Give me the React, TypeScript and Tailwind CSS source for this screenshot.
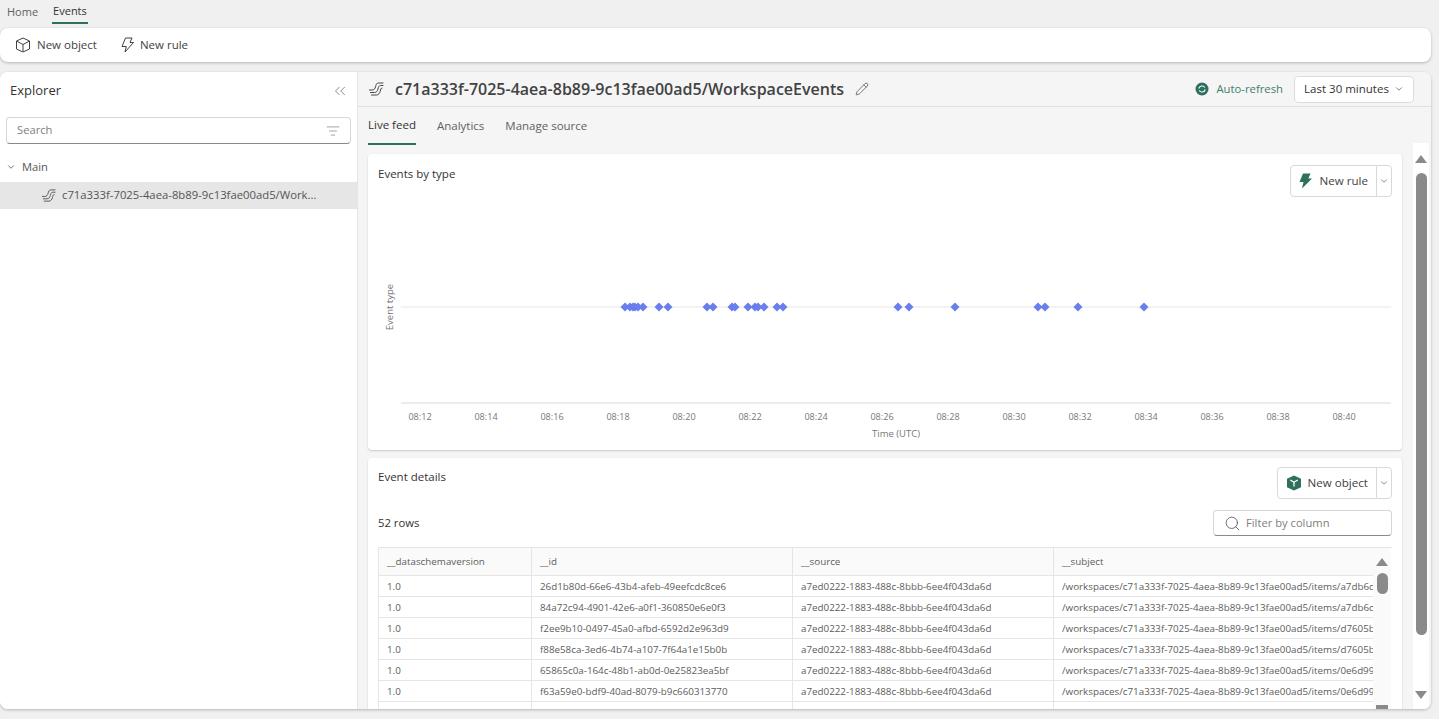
import { ChevronDown, ChevronsLeft, ListFilter, Pencil, Search } from "lucide-react";

const sans = "font-['Open_Sans','Noto_Sans',sans-serif]";

const eventXs = [625, 630, 633, 635, 638, 643, 659, 668, 707, 713, 732, 735, 748, 755, 758, 764, 777, 783, 898, 909, 955, 1038, 1045, 1078, 1144];
const ticks = ["08:12", "08:14", "08:16", "08:18", "08:20", "08:22", "08:24", "08:26", "08:28", "08:30", "08:32", "08:34", "08:36", "08:38", "08:40"];

const rows = [
  { id: "26d1b80d-66e6-43b4-afeb-49eefcdc8ce6", item: "a7db6d" },
  { id: "84a72c94-4901-42e6-a0f1-360850e6e0f3", item: "a7db6d" },
  { id: "f2ee9b10-0497-45a0-afbd-6592d2e963d9", item: "d7605b4" },
  { id: "f88e58ca-3ed6-4b74-a107-7f64a1e15b0b", item: "d7605b4" },
  { id: "65865c0a-164c-48b1-ab0d-0e25823ea5bf", item: "0e6d994" },
  { id: "f63a59e0-bdf9-40ad-8079-b9c660313770", item: "0e6d994" },
];

function StreamIcon({ className }: { className?: string }) {
  return (
    <svg viewBox="0 0 16 16" fill="none" stroke="currentColor" strokeWidth="1" strokeLinecap="round" className={className}>
      <path d="M15 2H10.500C8.500 2 8 3.800 7.500 5.800S6 9 4 9H1.500" />
      <path d="M15 4.500H12.500C11 4.500 10.500 6 10 8S8.500 11.500 6.500 11.500H2.500" />
      <path d="M14 7H14C13 7 12.700 8.500 12.200 10.300S10.500 14 8.500 14H3.500" />
    </svg>
  );
}

function CubeOutline() {
  return (
    <svg viewBox="0 0 16 16" fill="none" stroke="#424242" strokeWidth="1" strokeLinejoin="round" className="h-4 w-4">
      <path d="M8 1l6.500 3v8L8 15l-6.500-3V4z" />
      <path d="M1.800 4.200L8 7.500l6.200-3.300M8 7.500V14.700" />
    </svg>
  );
}

function BoltOutline() {
  return (
    <svg viewBox="0 0 16 16" fill="none" stroke="#424242" strokeWidth="1" strokeLinejoin="round" className="h-4 w-4">
      <path d="M6.500 1h6.500l-2 4.500h3.500L6 15l1.300-5.500H3z" />
    </svg>
  );
}

function BoltFilled() {
  return (
    <svg viewBox="0 0 16 16" fill="#2f6f5e" className="h-4 w-4">
      <path d="M6 .5h7.500l-2.200 5h3.700L5 15.500l1.500-6.500H2.500z" />
    </svg>
  );
}

function CubeFilled() {
  return (
    <svg viewBox="0 0 16 16" className="h-4 w-4">
      <path d="M8 .5l7 3.300v8.400L8 15.500l-7-3.300V3.800z" fill="#2f6f5e" />
      <path d="M4.300 5L8 7.200 11.700 5M8 7.200V11.500" stroke="#fff" strokeWidth="1.300" fill="none" />
    </svg>
  );
}

function SplitButton({ icon, label, pad }: { icon: React.ReactNode; label: string; pad: string }) {
  return (
    <div className="flex h-8 rounded border border-[#d9d9d9] bg-white text-[#424242]">
      <div className={`flex items-center gap-[6px] pr-[8px] text-[11.600px] font-medium ${pad}`}>
        {icon}
        <span>{label}</span>
      </div>
      <div className="flex w-[15px] items-center justify-center border-l border-[#d9d9d9]">
        <ChevronDown className="h-[10px] w-[10px]" strokeWidth={1.500} />
      </div>
    </div>
  );
}

function ScrollArrow({ down }: { down?: boolean }) {
  return (
    <svg viewBox="0 0 12 8" className="h-2 w-3" fill="#8a8a8a">
      <path d={down ? "M0 0h12L6 8z" : "M6 0l6 8H0z"} />
    </svg>
  );
}

function EventsChart() {
  return (
    <svg width="1034" height="254" className="block">
      <line x1="33" x2="1023" y1="111" y2="111" stroke="#e8e8e8" />
      <line x1="33" x2="1023" y1="207" y2="207" stroke="#d8d8d8" />
      {eventXs.map((x) => (
        <path key={x} d={`M${x - 368} 106.500l4.500 4.500-4.500 4.500-4.500-4.500z`} fill="#6a7eee" />
      ))}
      {ticks.map((t, i) => (
        <text key={t} x={52 + i * 66} y="224" textAnchor="middle" fontSize="9.100" fill="#777" fontFamily="Open Sans">
          {t}
        </text>
      ))}
      <text x="528" y="241" textAnchor="middle" fontSize="9.500" fill="#777" fontFamily="Open Sans">
        Time (UTC)
      </text>
      <text transform="translate(25 111) rotate(-90)" textAnchor="middle" fontSize="9.500" fill="#777" fontFamily="Open Sans">
        Event type
      </text>
    </svg>
  );
}

function EventsTable() {
  return (
    <div className="flex h-[162px] overflow-hidden border-t border-[#e5e5e5]">
      <div className="w-[995px] overflow-hidden">
        <table className="w-[1100px] table-fixed border-collapse text-[9.800px] leading-[13px] text-[#5c5c5c]">
          <colgroup>
            <col className="w-[153px]" />
            <col className="w-[261px]" />
            <col className="w-[261px]" />
            <col className="w-[425px]" />
          </colgroup>
          <thead>
            <tr className="h-[27px] bg-[#fafafa] text-left">
              {["__dataschemaversion", "__id", "__source", "__subject"].map((h) => (
                <th key={h} className="border border-t-0 border-[#e5e5e5] px-[8px] pt-[1px] font-normal">
                  {h}
                </th>
              ))}
            </tr>
          </thead>
          <tbody>
            {rows.map((r) => (
              <tr key={r.id} className="h-[21px]">
                <td className="border border-[#e5e5e5] px-[8px] pt-[2px]">1.0</td>
                <td className="border border-[#e5e5e5] px-[8px] pt-[2px]">{r.id}</td>
                <td className="border border-[#e5e5e5] px-[8px] pt-[2px]">a7ed0222-1883-488c-8bbb-6ee4f043da6d</td>
                <td className="overflow-hidden whitespace-nowrap border border-[#e5e5e5] px-[8px] pt-[2px]">
                  /workspaces/c71a333f-7025-4aea-8b89-9c13fae00ad5/items/{r.item}
                </td>
              </tr>
            ))}
            <tr className="h-[21px]">
              <td className="border border-[#e5e5e5]" />
              <td className="border border-[#e5e5e5]" />
              <td className="border border-[#e5e5e5]" />
              <td className="border border-[#e5e5e5]" />
            </tr>
          </tbody>
        </table>
      </div>
      <div className="flex w-[18px] flex-col items-center bg-[#fafafa] pt-[10px]">
        <ScrollArrow />
        <div className="mt-[7px] h-[21px] w-[11px] rounded-full bg-[#8a8a8a]" />
        <div className="mt-auto h-[4px] w-[12px] bg-[#8a8a8a]" />
      </div>
    </div>
  );
}

export default function App() {
  return (
    <div className={`${sans} flex h-screen flex-col overflow-hidden bg-[#f0f0f0] text-[#424242]`}>
      <div className="flex h-[28px] shrink-0 gap-[14px] pl-[7px] text-[11px]">
        <div className="flex h-[24px] items-center text-[#616161]">Home</div>
        <div className="flex h-[24px] items-center border-b-2 border-[#2f6f5e] px-[1px] font-medium text-[#333]">Events</div>
      </div>

      <div className="mr-2 flex h-[34px] shrink-0 items-center gap-[22px] rounded-lg bg-white pl-[15px] text-[11.500px] font-medium shadow-[0_1px_3px_rgba(0,0,0,0.25)]">
        <div className="flex items-center gap-[6px]">
          <CubeOutline />
          New object
        </div>
        <div className="flex items-center gap-[5px]">
          <BoltOutline />
          New rule
        </div>
      </div>

      <div className="mr-2 mt-[10px] flex h-[637px] shrink-0 overflow-hidden rounded-lg bg-white shadow-[0_1px_3px_rgba(0,0,0,0.25)]">
        <aside className="w-[358px] shrink-0 border-r border-[#e5e5e5] bg-white">
          <div className="flex h-[36px] items-center justify-between pl-[10px] pr-[8px] pt-[1px]">
            <span className="text-[13px] font-medium text-[#333]">Explorer</span>
            <ChevronsLeft className="h-[18px] w-[18px] text-[#666]" strokeWidth={1} />
          </div>
          <div className="mx-[6px] mt-[9px] flex h-[27px] items-center justify-between rounded border border-[#d6d6d6] border-b-[#8a8a8a] pl-[10px] pr-[10px] text-[11.200px] text-[#808080]">
            Search
            <ListFilter className="h-[14px] w-[14px]" strokeWidth={1.200} />
          </div>
          <div className="mt-[12px] flex h-[22px] items-center gap-[6px] pl-[6px] text-[11.200px] text-[#555]">
            <ChevronDown className="h-[10px] w-[10px]" />
            Main
          </div>
          <div className="mt-[4px] flex h-[27px] items-center gap-[6px] bg-[#e6e6e6] pl-[41px] text-[11.300px] text-[#555]">
            <StreamIcon className="h-[15px] w-[15px]" />
            c71a333f-7025-4aea-8b89-9c13fae00ad5/Work...
          </div>
        </aside>

        <main className="flex min-w-0 flex-1 flex-col bg-[#f5f5f5]">
          <header className="flex h-[35px] shrink-0 items-center border-b border-[#e0e0e0] pl-[10px] pr-[17px]">
            <StreamIcon className="h-4 w-4" />
            <h1 className="ml-[11px] text-[16px] font-semibold text-[#424242]">c71a333f-7025-4aea-8b89-9c13fae00ad5/WorkspaceEvents</h1>
            <Pencil className="ml-[11px] h-[14px] w-[14px]" strokeWidth={1.200} />
            <div className="ml-auto flex items-center gap-[7px] text-[11.300px] font-medium text-[#3f7f6c]">
              <svg viewBox="0 0 14 14" className="h-[14px] w-[14px]">
                <circle cx="7" cy="7" r="6.500" fill="#2f6f5e" />
                <path d="M3.800 6.500A3.300 3.300 0 0 1 9.800 5.500M10.200 7.500A3.300 3.300 0 0 1 4.200 8.500" stroke="#fff" fill="none" strokeWidth="1.100" />
              </svg>
              Auto-refresh
            </div>
            <div className="ml-[11px] flex h-[27px] w-[120px] items-center justify-center gap-[5px] rounded border border-[#dcdcdc] bg-white text-[11.500px] font-medium text-[#333]">
              Last 30 minutes
              <ChevronDown className="h-[10px] w-[10px]" strokeWidth={1.500} />
            </div>
          </header>

          <div className="flex min-h-0 flex-1">
            <div className="flex w-[1054px] shrink-0 flex-col pl-[10px]">
              <nav className="flex h-[38px] shrink-0 gap-[21px] text-[11.500px] text-[#616161]">
                <div className="flex items-center border-b-2 border-[#2f6f5e] font-medium text-[#333]">Live feed</div>
                <div className="flex items-center pb-[1px]">Analytics</div>
                <div className="flex items-center pb-[1px]">Manage source</div>
              </nav>

              <section className="mt-[9px] h-[296px] w-[1034px] shrink-0 rounded bg-white shadow-[0_1px_2px_rgba(0,0,0,0.18)]">
                <div className="flex h-[42px] items-start justify-between pl-[10px] pr-[10px] pt-[11px]">
                  <h2 className="text-[11.500px] font-medium text-[#333]">Events by type</h2>
                  <SplitButton icon={<BoltFilled />} label="New rule" pad="pl-[6px]" />
                </div>
                <EventsChart />
              </section>

              <section className="mt-[8px] w-[1034px] flex-1 rounded-t bg-white px-[10px] pt-[9px] shadow-[0_1px_2px_rgba(0,0,0,0.18)]">
                <div className="flex items-start justify-between">
                  <h2 className="pt-[1px] text-[11.500px] font-medium text-[#333]">Event details</h2>
                  <SplitButton icon={<CubeFilled />} label="New object" pad="pl-[8px]" />
                </div>
                <div className="mt-[11px] flex items-center justify-between">
                  <span className="text-[11.300px] font-medium text-[#333]">52 rows</span>
                  <div className="flex h-[26px] w-[179px] items-center gap-[5px] rounded border border-[#d6d6d6] border-b-[#8a8a8a] pl-[10px] text-[11.200px] text-[#808080]">
                    <Search className="h-[17px] w-[17px] text-[#555]" strokeWidth={1.200} />
                    Filter by column
                  </div>
                </div>
                <div className="mt-[11px]">
                  <EventsTable />
                </div>
              </section>
            </div>

            <div className="ml-[1px] mt-[36px] flex w-[16px] flex-col items-center bg-white pb-[10px] pt-[12px]">
              <ScrollArrow />
              <div className="mt-[10px] h-[462px] w-[11px] rounded-full bg-[#8a8a8a]" />
              <div className="mt-auto">
                <ScrollArrow down />
              </div>
            </div>
          </div>
        </main>
      </div>
    </div>
  );
}
